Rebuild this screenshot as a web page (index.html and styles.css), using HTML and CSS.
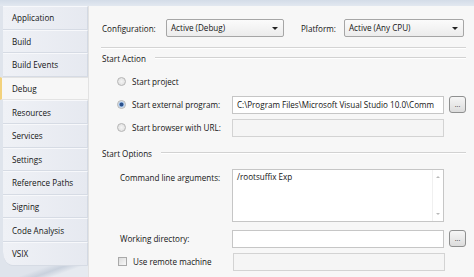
FILE: index.html
```html
<!DOCTYPE html>
<html lang="en">
<head>
  <meta charset="UTF-8">
  <meta name="viewport" content="width=device-width, initial-scale=1.0">
  <title>Debug Properties</title>
  <link rel="stylesheet" href="styles.css">
</head>
<body>

  <div class="window">
    <div class="top-strip"></div>
    <div class="main">
      <nav class="tabs">
        <div class="tab">Application</div>
        <div class="tab">Build</div>
        <div class="tab">Build Events</div>
        <div class="tab selected">Debug</div>
        <div class="tab">Resources</div>
        <div class="tab">Services</div>
        <div class="tab">Settings</div>
        <div class="tab">Reference Paths</div>
        <div class="tab">Signing</div>
        <div class="tab">Code Analysis</div>
        <div class="tab last">VSIX</div>
        <div class="tab-tail"></div>
      </nav>

      <div class="panel">
        <div class="config-row">
          <span class="cfg-label">Configuration:</span>
          <div class="dropdown cfg-drop">Active (Debug)<span class="arrow"></span></div>
          <span class="cfg-label platform-label">Platform:</span>
          <div class="dropdown platform-drop">Active (Any CPU)<span class="arrow"></span></div>
        </div>
        <div class="rule"></div>

        <div class="group-head">Start Action</div>
        <div class="action-rows">
          <div class="row">
            <label class="choice"><span class="radio"></span>Start project</label>
          </div>
          <div class="row">
            <label class="choice"><span class="radio checked"></span>Start external program:</label>
            <div class="field">C:\Program Files\Microsoft Visual Studio 10.0\Comm</div>
            <button type="button" class="dots">...</button>
          </div>
          <div class="row">
            <label class="choice"><span class="radio"></span>Start browser with URL:</label>
            <div class="field disabled"></div>
          </div>
        </div>

        <div class="group-head options-head">Start Options</div>
        <div class="option-rows">
          <div class="row args-row">
            <label class="opt-label">Command line arguments:</label>
            <div class="field area">
              <span class="area-text">/rootsuffix Exp</span>
              <span class="scroll"><span class="up"></span><span class="down"></span></span>
            </div>
          </div>
          <div class="row dir-row">
            <label class="opt-label">Working directory:</label>
            <div class="field"></div>
            <button type="button" class="dots">...</button>
          </div>
          <div class="row remote-row">
            <label class="choice check-choice"><span class="checkbox"></span>Use remote machine</label>
            <div class="field disabled"></div>
          </div>
        </div>
      </div>
    </div>
  </div>

</body>
</html>
```

FILE: styles.css
```css
body {
  margin: 0;
  font-family: "Open Sans", "Noto Sans", Arial, sans-serif;
  font-size: 8.1px;
  color: #141414;
}
.window {
  width: 474px;
  height: 277px;
  overflow: hidden;
  background-color: #dfe5ee;
  display: flex;
  flex-direction: column;
}
.top-strip {
  height: 6px;
  background: linear-gradient(#d3dce8, #e2e8f0);
}
.main {
  flex: 1;
  display: flex;
}

/* left tab column */
.tabs {
  width: 88px;
  display: flex;
  flex-direction: column;
  background-color: #dfe4ec;
}
.tab {
  height: 23.6px;
  box-sizing: border-box;
  margin-left: 3px;
  padding-left: 9px;
  display: flex;
  align-items: center;
  background: linear-gradient(90deg, #eff1f6, #e6e9f0);
  border-top: 1px solid #f7f8fb;
  border-bottom: 1px solid #d6dbe4;
  border-right: 1px solid #d3d9e3;
}
.tab.selected {
  margin-left: 0;
  background: #f7f7f7;
  border-right: none;
  border-top-color: #e3e3e3;
  border-bottom-color: #e3e3e3;
  border-left: 2px solid #f3d27c;
  padding-left: 10px;
}
.tab.last {
  border-bottom-left-radius: 10px 14px;
}
.tab-tail {
  flex: 1;
  background: linear-gradient(160deg, #dfe4ec 40%, #c9d1dd 55%, #e6eaf0 70%);
}

/* right panel */
.panel {
  flex: 1;
  background-color: #f7f7f7;
  padding: 13px 8px 0 13px;
  border-left: 1px solid #e2e2e2;
}
.config-row {
  display: flex;
  align-items: center;
  height: 18px;
}
.cfg-label {
  width: 64px;
}
.platform-label {
  width: 43px;
  margin-left: 17px;
}
.dropdown {
  position: relative;
  box-sizing: border-box;
  height: 18px;
  line-height: 16px;
  padding-left: 4px;
  border: 1px solid #a6a6a6;
  border-radius: 2px;
  background: linear-gradient(#fbfbfb, #ececec);
}
.cfg-drop {
  width: 118px;
}
.platform-drop {
  width: 120px;
}
.arrow {
  position: absolute;
  right: 5px;
  top: 7px;
  border-left: 3px solid transparent;
  border-right: 3px solid transparent;
  border-top: 3px solid #222;
}
.rule {
  height: 1px;
  margin: 10px 0 0 -1px;
  background-color: #d4d4d4;
  border-bottom: 1px solid #ffffff;
}
.group-head {
  display: flex;
  align-items: center;
  height: 12px;
  margin-top: 3px;
}
.group-head::after {
  content: "";
  flex: 1;
  height: 1px;
  margin-left: 9px;
  background-color: #d2d2d2;
  border-bottom: 1px solid #ffffff;
}
.options-head {
  margin-top: 10px;
}
.action-rows {
  margin-top: 8px;
  display: flex;
  flex-direction: column;
  gap: 4px;
}
.row {
  display: flex;
  align-items: center;
  min-height: 19px;
}
.choice {
  width: 115px;
  margin-left: 15px;
  display: flex;
  align-items: center;
}
.radio {
  box-sizing: border-box;
  width: 9px;
  height: 9px;
  margin-right: 6px;
  border-radius: 50%;
  border: 1px solid #b5b5b5;
  background: radial-gradient(#f4f4f4, #dcdcdc);
}
.radio.checked {
  background: radial-gradient(circle, #2a4f8a 0 1.6px, #8fb2dc 2.2px, #e6ecf4 3.4px);
}
.field {
  box-sizing: border-box;
  width: 212px;
  height: 18px;
  padding: 0 4px;
  line-height: 16px;
  white-space: nowrap;
  overflow: hidden;
  border: 1px solid #c6c6c6;
  background-color: #ffffff;
}
.field.disabled {
  background-color: #f5f5f5;
  border-color: #d3d3d3;
}
.dots {
  box-sizing: border-box;
  width: 17px;
  height: 17px;
  margin-left: 5px;
  padding: 0;
  font-family: inherit;
  font-size: 7px;
  line-height: 10px;
  color: #333;
  border: 1px solid #8f9090;
  border-radius: 3px;
  background: linear-gradient(#f6f6f6, #dcdcdc);
}
.option-rows {
  margin-top: 10px;
  display: flex;
  flex-direction: column;
}
.dir-row {
  margin-top: 7px;
}
.remote-row {
  margin-top: 4px;
}
.opt-label {
  width: 112px;
  margin-left: 18px;
}
.args-row {
  align-items: flex-start;
}
.args-row .opt-label {
  margin-top: 3px;
}
.area {
  position: relative;
  height: 53px;
  padding: 2px 4px;
  line-height: 10px;
}
.scroll {
  position: absolute;
  top: 0;
  right: 0;
  bottom: 0;
  width: 10px;
  border-left: 1px solid #f0f0f0;
}
.up, .down {
  position: absolute;
  left: 3px;
  border-left: 2px solid transparent;
  border-right: 2px solid transparent;
}
.up {
  top: 6px;
  border-bottom: 2px solid #b9b9b9;
}
.down {
  bottom: 6px;
  border-top: 2px solid #b9b9b9;
}
.check-choice {
  margin-left: 16px;
}
.checkbox {
  box-sizing: border-box;
  width: 9px;
  height: 9px;
  margin-right: 6px;
  border: 1px solid #a9a9a9;
  background: linear-gradient(135deg, #dcdcdc, #f8f8f8);
}
```
